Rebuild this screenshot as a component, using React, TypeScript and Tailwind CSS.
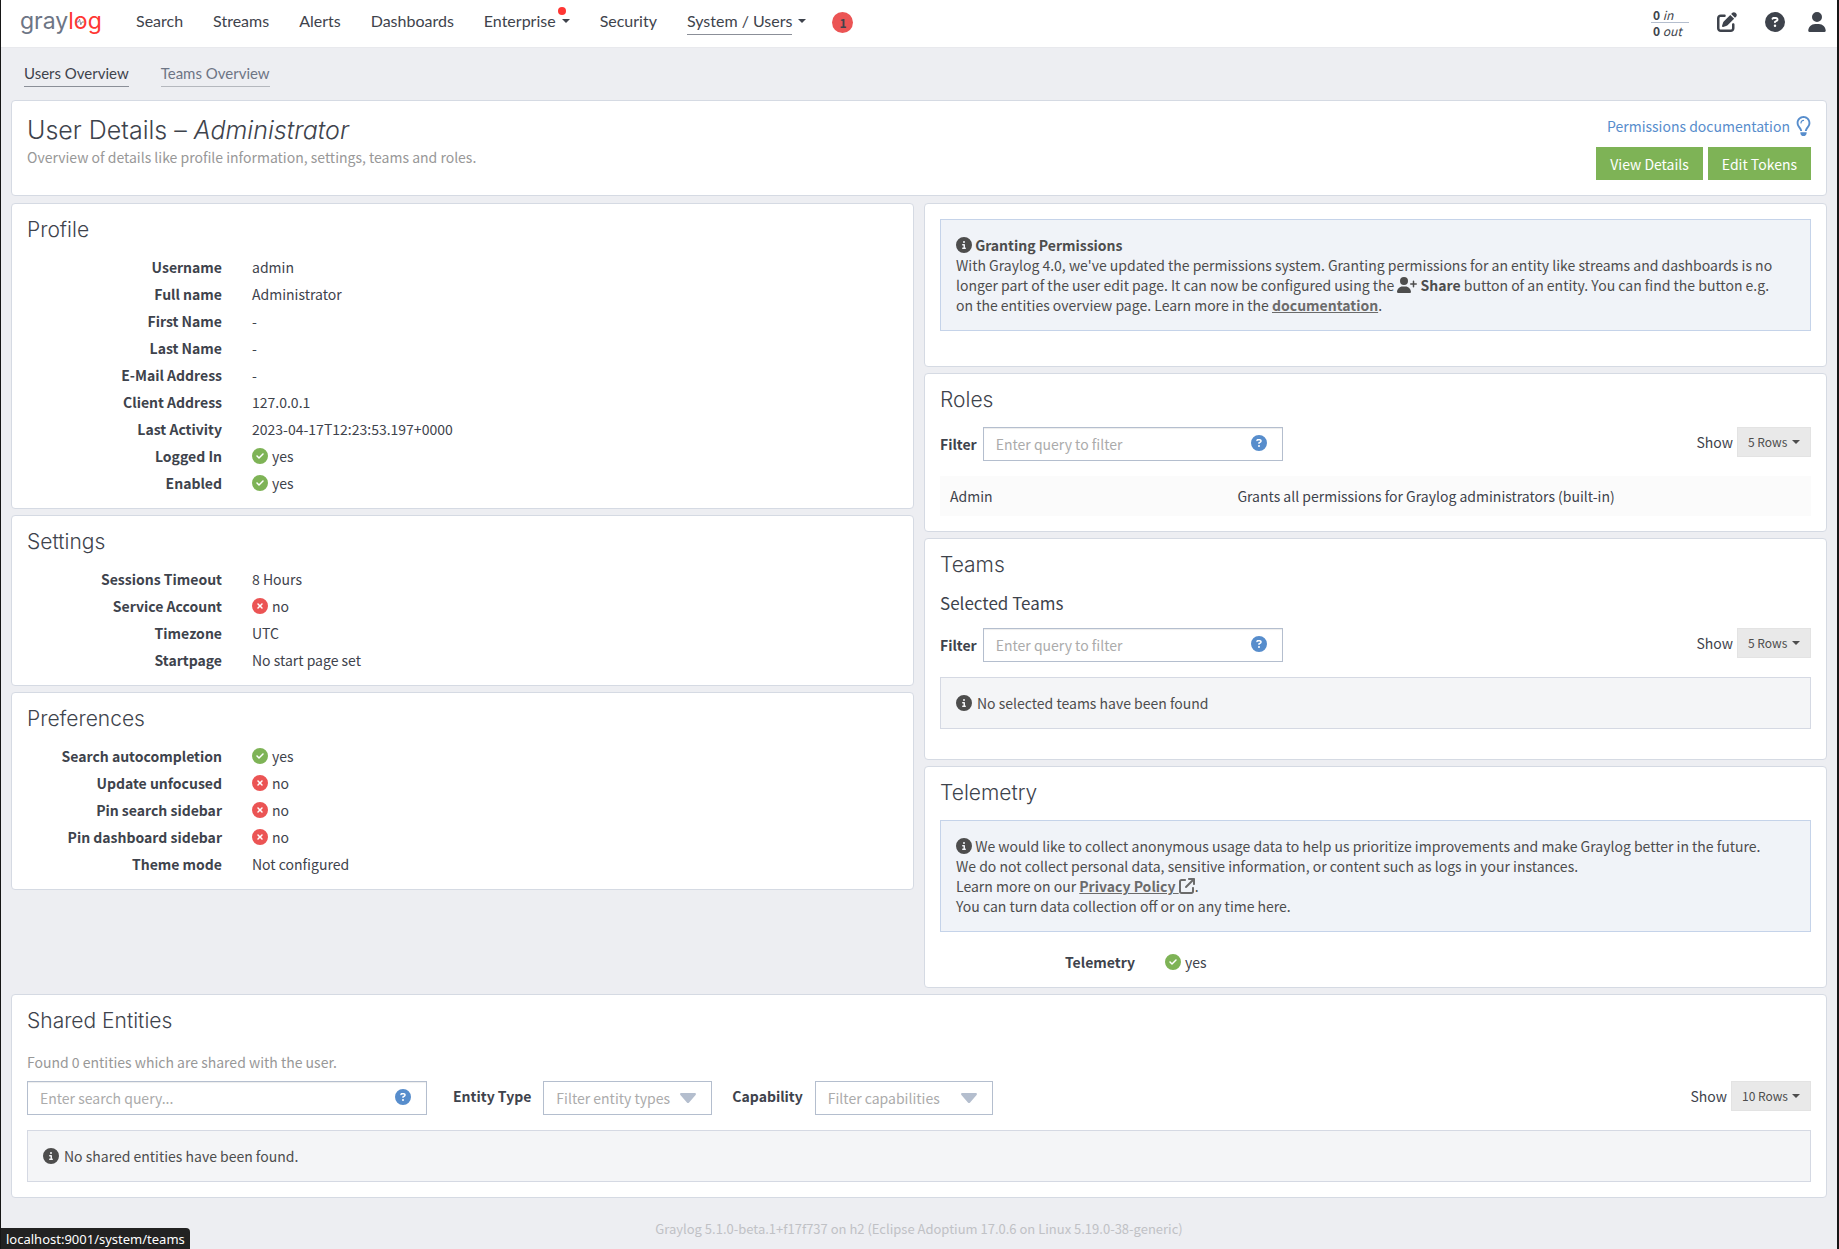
import { useState } from 'react';
import type { ReactNode } from 'react';
import {
  FaArrowUpRightFromSquare,
  FaCircleCheck,
  FaCircleInfo,
  FaCircleQuestion,
  FaCircleXmark,
  FaPenToSquare,
  FaRegLightbulb,
  FaUser,
  FaUserPlus,
} from 'react-icons/fa6';

type Row = { label: string; value: string | boolean };

const profile: Row[] = [
  { label: 'Username', value: 'admin' },
  { label: 'Full name', value: 'Administrator' },
  { label: 'First Name', value: '-' },
  { label: 'Last Name', value: '-' },
  { label: 'E-Mail Address', value: '-' },
  { label: 'Client Address', value: '127.0.0.1' },
  { label: 'Last Activity', value: '2023-04-17T12:23:53.197+0000' },
  { label: 'Logged In', value: true },
  { label: 'Enabled', value: true },
];

const settings: Row[] = [
  { label: 'Sessions Timeout', value: '8 Hours' },
  { label: 'Service Account', value: false },
  { label: 'Timezone', value: 'UTC' },
  { label: 'Startpage', value: 'No start page set' },
];

const preferences: Row[] = [
  { label: 'Search autocompletion', value: true },
  { label: 'Update unfocused', value: false },
  { label: 'Pin search sidebar', value: false },
  { label: 'Pin dashboard sidebar', value: false },
  { label: 'Theme mode', value: 'Not configured' },
];

function Caret() {
  return (
    <svg viewBox="0 0 8 4" className="h-1 w-2 shrink-0" fill="currentColor" aria-hidden="true">
      <path d="M0 0h8L4 4z" />
    </svg>
  );
}

function Card({ title, children }: { title?: string; children: ReactNode }) {
  return (
    <section className="rounded-sm border border-[#d5dae3] bg-white p-[15px]">
      {title && <h2 className="mb-4 font-[Inter,sans-serif] text-[21px] leading-[22px] font-light">{title}</h2>}
      {children}
    </section>
  );
}

// boolean values get a coloured yes / no icon
function Value({ value }: { value: string | boolean }) {
  if (typeof value === 'string') return <>{value}</>;
  return (
    <span className="flex items-center gap-1">
      {value ? <FaCircleCheck className="size-4 text-[#7eb356]" /> : <FaCircleXmark className="size-4 text-[#eb5454]" />}
      {value ? 'yes' : 'no'}
    </span>
  );
}

function DetailList({ rows }: { rows: Row[] }) {
  return (
    <dl className="flex flex-col gap-[7px]">
      {rows.map((row) => (
        <div key={row.label} className="flex gap-[30px]">
          <dt className="w-[195px] text-right font-bold">{row.label}</dt>
          <dd>
            <Value value={row.value} />
          </dd>
        </div>
      ))}
    </dl>
  );
}

function InfoAlert({ children }: { children: ReactNode }) {
  return <div className="border border-[#c5d3e9] bg-[#f0f3f8] py-[15px] pr-6 pl-[15px] text-[#4d4d4d]">{children}</div>;
}

function EmptyAlert({ children }: { children: ReactNode }) {
  return (
    <div className="flex items-center gap-[5px] border border-[#d5d9e3] bg-[#f4f5f7] p-[15px] text-[#4d4d4d]">
      <FaCircleInfo className="size-4" />
      {children}
    </div>
  );
}

function QueryInput({ id, placeholder, label }: { id: string; placeholder: string; label?: string }) {
  const [query, setQuery] = useState('');
  return (
    <div className="relative">
      <input
        id={id}
        aria-label={label}
        value={query}
        onChange={(e) => setQuery(e.target.value)}
        placeholder={placeholder}
        className="h-[34px] w-full border border-[#b4bece] bg-white px-3 shadow-[inset_0_1px_1px_rgba(0,0,0,0.075)] placeholder:text-[#ababab]"
      />
      <FaCircleQuestion className="absolute top-2 right-4 size-4 text-[#578dcc]" />
    </div>
  );
}

function PageSize({ id, size }: { id: string; size: number }) {
  return (
    <div className="flex h-[30px] items-center gap-1">
      <label htmlFor={id}>Show</label>
      <span className="relative flex items-center">
        <select
          id={id}
          defaultValue={size}
          className="h-[30px] appearance-none border border-[#e3e3e3] bg-[#e9e9e9] pr-[22px] pl-2.5 text-xs text-[#4d4d4d]"
        >
          <option value={size}>{size} Rows</option>
        </select>
        <span className="pointer-events-none absolute right-[11px] text-[#4d4d4d]">
          <Caret />
        </span>
      </span>
    </div>
  );
}

function FilterBar({ id }: { id: string }) {
  return (
    <div className="mb-[15px] flex items-start justify-between">
      <div className="flex items-center gap-1.5">
        <label htmlFor={id} className="font-bold">
          Filter
        </label>
        <div className="w-[300px]">
          <QueryInput id={id} placeholder="Enter query to filter" />
        </div>
      </div>
      <PageSize id={`${id}-size`} size={5} />
    </div>
  );
}

function FilterSelect({ id, label, placeholder, width }: { id: string; label: string; placeholder: string; width: string }) {
  return (
    <div className="flex items-start gap-3">
      <label htmlFor={id} className="flex h-[30px] items-center font-bold">
        {label}
      </label>
      <span className="relative flex items-center">
        <select id={id} className={`h-[34px] appearance-none border border-[#b4bece] bg-white px-3 text-[#ababab] ${width}`}>
          <option>{placeholder}</option>
        </select>
        <svg viewBox="0 0 16 10" className="pointer-events-none absolute right-4 h-2.5 w-4" fill="#b4bece" aria-hidden="true">
          <path d="M1.2 0h13.6c1 0 1.5 1.1.8 1.9L9.1 9.4a1.5 1.5 0 0 1-2.2 0L.4 1.9C-.3 1.1.2 0 1.2 0z" />
        </svg>
      </span>
    </div>
  );
}

function Logo() {
  return (
    <a href="#" aria-label="graylog" className="relative flex h-[42px] w-[82px] items-center font-[Inter,sans-serif] text-[23px] leading-8 text-[#6d7585]">
      gray<span className="text-[#ff3633]">log</span>
      <svg viewBox="0 0 10 10" className="absolute top-[18px] left-[56px] size-2" fill="none" stroke="#6d7585" aria-hidden="true">
        <path d="M0 5h3l1.5-3.5 1.5 7L7.5 5H10" />
      </svg>
    </a>
  );
}

function Navbar() {
  return (
    <header className="flex h-12 items-start border-b border-[#e8e9ed] bg-white pr-2.5 pl-[19px]">
      <Logo />
      <nav className="ml-[34px] flex h-[42px] items-center gap-[30px] font-[Lato,sans-serif] text-base leading-5">
        <a href="#">Search</a>
        <a href="#">Streams</a>
        <a href="#">Alerts</a>
        <a href="#">Dashboards</a>
        <button className="relative flex items-center gap-1.5">
          Enterprise
          <Caret />
          <span className="absolute -top-1 right-1 size-2 rounded-full bg-[#ff3633]" />
        </button>
        <a href="#">Security</a>
        <button className="flex items-center gap-1.5">
          <span className="-mb-1 border-b border-[#8b8f98] pb-[3px]">System / Users</span>
          <Caret />
        </button>
      </nav>
      <span className="mt-3 ml-[26px] flex size-[21px] items-center justify-center rounded-full bg-[#eb5454] text-xs font-bold">
        1
      </span>
      <div className="ml-auto flex h-11 items-center">
        <div className="w-[38px] pl-0.5 text-xs leading-[15px]">
          <div className="-ml-0.5 border-b border-[#b4bece] pl-0.5">
            <b>0</b> <i>in</i>
          </div>
          <b>0</b> <i>out</i>
        </div>
        <button aria-label="Scratchpad" className="ml-7">
          <FaPenToSquare className="size-5" />
        </button>
        <button aria-label="Help" className="ml-7">
          <FaCircleQuestion className="size-5" />
        </button>
        <button aria-label="User menu" className="ml-[22px]">
          <FaUser className="size-5" />
        </button>
      </div>
    </header>
  );
}

function PageHeader() {
  return (
    <section className="mb-[7px] flex min-h-24 justify-between rounded-sm border border-[#d5dae3] bg-white p-[15px]">
      <div>
        <h1 className="font-[Inter,sans-serif] text-[25px] leading-7 font-light">
          User Details – <i>Administrator</i>
        </h1>
        <p className="mt-[3px] text-[#989898]">Overview of details like profile information, settings, teams and roles.</p>
      </div>
      <div className="flex flex-col items-end gap-[11px]">
        <a href="#" className="flex items-center gap-1.5 leading-5 text-[#578dcc]">
          Permissions documentation
          <FaRegLightbulb className="h-5 w-[15px]" />
        </a>
        <div className="flex gap-[5px]">
          <button className="h-[33px] bg-[#7eb356] px-3.5 text-white">View Details</button>
          <button className="h-[33px] bg-[#7eb356] px-3.5 text-white">Edit Tokens</button>
        </div>
      </div>
    </section>
  );
}

export default function App() {
  return (
    <div className="min-h-screen border-r-2 border-l border-[#161616] bg-[#edeef2] font-['Noto_Sans_CJK_SC','Noto_Sans',sans-serif] text-sm leading-5 text-[#3e434c]">
      <Navbar />

      <nav className="flex gap-8 px-[23px] pt-[15px] pb-[13px] font-[Lato,sans-serif] text-[15px] leading-5">
        <a href="#" className="border-b border-[#8b8f98] pb-[3px]">
          Users Overview
        </a>
        <a href="#" className="border-b border-[#b5b8be] pb-[3px] text-[#6d7585]">
          Teams Overview
        </a>
      </nav>

      <main className="px-2.5">
        <PageHeader />

        <div className="mb-1.5 grid grid-cols-2 items-start gap-2.5">
          <div className="flex flex-col gap-1.5">
            <Card title="Profile">
              <DetailList rows={profile} />
            </Card>
            <Card title="Settings">
              <DetailList rows={settings} />
            </Card>
            <Card title="Preferences">
              <DetailList rows={preferences} />
            </Card>
          </div>

          <div className="flex flex-col gap-1.5">
            <Card>
              <div className="mb-5">
                <InfoAlert>
                  <FaCircleInfo className="inline size-4 align-[-2px]" /> <b>Granting Permissions</b>
                  <br />
                  With Graylog 4.0, we've updated the permissions system. Granting permissions for an entity like streams and
                  dashboards is no longer part of the user edit page. It can now be configured using the{' '}
                  <FaUserPlus className="inline h-4 w-5 align-[-2px]" /> <b>Share</b> button of an entity. You can find the
                  button e.g. on the entities overview page. Learn more in the{' '}
                  <a href="#" className="font-bold text-[#6b6b6b] underline">
                    documentation
                  </a>
                  .
                </InfoAlert>
              </div>
            </Card>

            <Card title="Roles">
              <FilterBar id="roles-filter" />
              <table className="w-full bg-[#fbfbfb]">
                <tbody>
                  <tr className="h-10">
                    <td className="w-[33%] px-2.5">Admin</td>
                    <td className="px-2.5">Grants all permissions for Graylog administrators (built-in)</td>
                  </tr>
                </tbody>
              </table>
            </Card>

            <Card title="Teams">
              <h3 className="mb-[14px] text-[17px] leading-[22px]">Selected Teams</h3>
              <FilterBar id="teams-filter" />
              <div className="mb-[15px]">
                <EmptyAlert>No selected teams have been found</EmptyAlert>
              </div>
            </Card>

            <Card title="Telemetry">
              <div className="mb-5">
                <InfoAlert>
                  <FaCircleInfo className="inline size-4 align-[-2px]" /> We would like to collect anonymous usage data to help
                  us prioritize improvements and make Graylog better in the future.
                  <br />
                  We do not collect personal data, sensitive information, or content such as logs in your instances.
                  <br />
                  Learn more on our{' '}
                  <a href="#" className="font-bold text-[#6b6b6b] underline">
                    Privacy Policy <FaArrowUpRightFromSquare className="inline size-4 align-[-2px]" />
                  </a>
                  .
                  <br />
                  You can turn data collection off or on any time here.
                </InfoAlert>
              </div>
              <DetailList rows={[{ label: 'Telemetry', value: true }]} />
            </Card>
          </div>
        </div>

        <Card title="Shared Entities">
          <p className="mb-[9px] pt-1 text-[#989898]">Found 0 entities which are shared with the user.</p>
          <div className="mb-[15px] flex items-start">
            <div className="mr-[26px] w-[400px]">
              <QueryInput id="entity-query" label="Search entities" placeholder="Enter search query..." />
            </div>
            <div className="flex gap-5">
              <FilterSelect id="entity-type" label="Entity Type" placeholder="Filter entity types" width="w-[169px]" />
              <FilterSelect id="capability" label="Capability" placeholder="Filter capabilities" width="w-[178px]" />
            </div>
            <div className="ml-auto">
              <PageSize id="entity-size" size={10} />
            </div>
          </div>
          <EmptyAlert>No shared entities have been found.</EmptyAlert>
        </Card>
      </main>

      <footer className="pt-5 pb-2 text-center text-[13px] leading-[22px] text-[#c0c1c5]">
        Graylog 5.1.0-beta.1+f17f737 on h2 (Eclipse Adoptium 17.0.6 on Linux 5.19.0-38-generic)
      </footer>

      {/* link target shown by the browser */}
      <div className="fixed bottom-0 left-px flex h-[21px] items-center rounded-tr-sm bg-[#222222] px-[5px] font-['Noto_Sans',sans-serif] text-[13px] text-white">
        localhost:9001/system/teams
      </div>
    </div>
  );
}
